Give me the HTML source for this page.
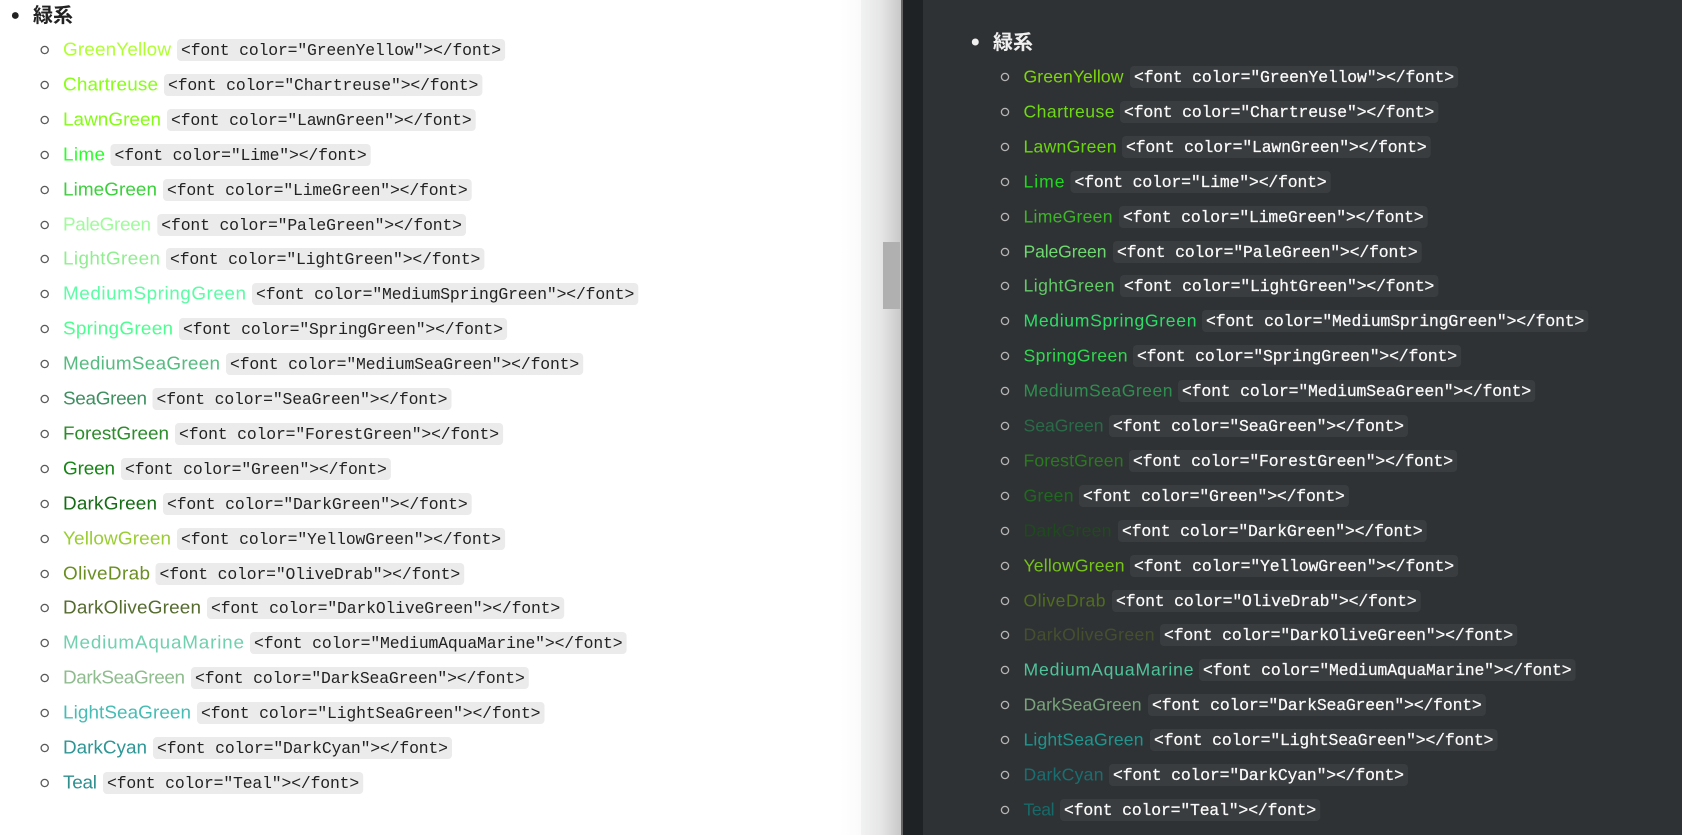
<!DOCTYPE html>
<html><head><meta charset="utf-8"><style>
html,body{margin:0;padding:0;background:#fff;width:1682px;height:835px;overflow:hidden}
svg{display:block}
.L .l{font:18.9px "Liberation Sans",sans-serif}
.D .l{font:17.6px "Liberation Sans",sans-serif}
.c{font:16.4px "Liberation Mono",monospace}
.t{font:bold 20px "Liberation Sans","Noto Sans CJK JP",sans-serif}
.L .c{fill:#222}
.L rect{fill:#ebebeb}
.L circle{fill:none;stroke:#5a5a5a;stroke-width:1.3}
.D .c{fill:#fafafa;stroke:#fafafa;stroke-width:.25}
.D rect{fill:#3a3d3f}
.D circle{fill:none;stroke:#b5b5b5;stroke-width:1.3}
</style></head><body>
<svg width="1682" height="835" viewBox="0 0 1682 835" xmlns="http://www.w3.org/2000/svg">
<defs><linearGradient id="s" x1="0" x2="1" y1="0" y2="0"><stop offset="0" stop-color="#f1f2f2"/><stop offset=".5" stop-color="#e6e6e6"/><stop offset="1" stop-color="#c8c8c8"/></linearGradient>
<linearGradient id="f" x1="0" x2="1" y1="0" y2="0"><stop offset="0" stop-color="#fff"/><stop offset="1" stop-color="#fafafa"/></linearGradient></defs>
<rect x="0" y="0" width="1682" height="835" fill="#fff"/>
<rect x="840" y="0" width="21" height="835" fill="url(#f)"/>
<rect x="861" y="0" width="40" height="835" fill="url(#s)"/>
<rect x="883" y="242" width="17" height="67" fill="#b0b0b0"/>
<rect x="901" y="0" width="2" height="835" fill="#666"/>
<rect x="903" y="0" width="20" height="835" fill="#1e2224"/>
<rect x="923" y="0" width="759" height="835" fill="#2f3234"/>

<g class="L">
<circle cx="15.3" cy="15.5" r="3.4" style="fill:#222;stroke:none"/>
<text class="t" x="33" y="22" fill="#222" textLength="40">緑系</text>
<g transform="translate(0,50)"><circle cx="44.7" r="3.6"/><text class="l" x="63" y="5.5" fill="#B0FF33" textLength="108">GreenYellow</text><rect x="177" y="-11" width="328.1" height="22" rx="4"/><text class="c" x="181" y="5" textLength="320.1">&lt;font color="GreenYellow"&gt;&lt;/font&gt;</text></g>
<g transform="translate(0,85)"><circle cx="44.7" r="3.6"/><text class="l" x="63" y="5.5" fill="#88FF15" textLength="95">Chartreuse</text><rect x="164" y="-11" width="318.4" height="22" rx="4"/><text class="c" x="168" y="5" textLength="310.4">&lt;font color="Chartreuse"&gt;&lt;/font&gt;</text></g>
<g transform="translate(0,120)"><circle cx="44.7" r="3.6"/><text class="l" x="63" y="5.5" fill="#85FC15" textLength="98">LawnGreen</text><rect x="167" y="-11" width="308.7" height="22" rx="4"/><text class="c" x="171" y="5" textLength="300.7">&lt;font color="LawnGreen"&gt;&lt;/font&gt;</text></g>
<g transform="translate(0,155)"><circle cx="44.7" r="3.6"/><text class="l" x="63" y="5.5" fill="#2BFF2B" textLength="42">Lime</text><rect x="110.5" y="-11" width="260.2" height="22" rx="4"/><text class="c" x="114.5" y="5" textLength="252.2">&lt;font color="Lime"&gt;&lt;/font&gt;</text></g>
<g transform="translate(0,190)"><circle cx="44.7" r="3.6"/><text class="l" x="63" y="5.5" fill="#3CD03C" textLength="94">LimeGreen</text><rect x="163" y="-11" width="308.7" height="22" rx="4"/><text class="c" x="167" y="5" textLength="300.7">&lt;font color="LimeGreen"&gt;&lt;/font&gt;</text></g>
<g transform="translate(0,225)"><circle cx="44.7" r="3.6"/><text class="l" x="63" y="5.5" fill="#A0FB9C" textLength="88">PaleGreen</text><rect x="157.3" y="-11" width="308.7" height="22" rx="4"/><text class="c" x="161.3" y="5" textLength="300.7">&lt;font color="PaleGreen"&gt;&lt;/font&gt;</text></g>
<g transform="translate(0,259)"><circle cx="44.7" r="3.6"/><text class="l" x="63" y="5.5" fill="#90EE90" textLength="97">LightGreen</text><rect x="166" y="-11" width="318.4" height="22" rx="4"/><text class="c" x="170" y="5" textLength="310.4">&lt;font color="LightGreen"&gt;&lt;/font&gt;</text></g>
<g transform="translate(0,294)"><circle cx="44.7" r="3.6"/><text class="l" x="63" y="5.5" fill="#5DFCA5" textLength="183">MediumSpringGreen</text><rect x="252" y="-11" width="386.3" height="22" rx="4"/><text class="c" x="256" y="5" textLength="378.3">&lt;font color="MediumSpringGreen"&gt;&lt;/font&gt;</text></g>
<g transform="translate(0,329)"><circle cx="44.7" r="3.6"/><text class="l" x="63" y="5.5" fill="#4DFF90" textLength="110">SpringGreen</text><rect x="179" y="-11" width="328.1" height="22" rx="4"/><text class="c" x="183" y="5" textLength="320.1">&lt;font color="SpringGreen"&gt;&lt;/font&gt;</text></g>
<g transform="translate(0,364)"><circle cx="44.7" r="3.6"/><text class="l" x="63" y="5.5" fill="#55BB80" textLength="157">MediumSeaGreen</text><rect x="226" y="-11" width="357.2" height="22" rx="4"/><text class="c" x="230" y="5" textLength="349.2">&lt;font color="MediumSeaGreen"&gt;&lt;/font&gt;</text></g>
<g transform="translate(0,399)"><circle cx="44.7" r="3.6"/><text class="l" x="63" y="5.5" fill="#3F8F60" textLength="84">SeaGreen</text><rect x="152.5" y="-11" width="299" height="22" rx="4"/><text class="c" x="156.5" y="5" textLength="291">&lt;font color="SeaGreen"&gt;&lt;/font&gt;</text></g>
<g transform="translate(0,434)"><circle cx="44.7" r="3.6"/><text class="l" x="63" y="5.5" fill="#2C8C2C" textLength="106">ForestGreen</text><rect x="175" y="-11" width="328.1" height="22" rx="4"/><text class="c" x="179" y="5" textLength="320.1">&lt;font color="ForestGreen"&gt;&lt;/font&gt;</text></g>
<g transform="translate(0,469)"><circle cx="44.7" r="3.6"/><text class="l" x="63" y="5.5" fill="#158515" textLength="52">Green</text><rect x="121" y="-11" width="269.9" height="22" rx="4"/><text class="c" x="125" y="5" textLength="261.9">&lt;font color="Green"&gt;&lt;/font&gt;</text></g>
<g transform="translate(0,504)"><circle cx="44.7" r="3.6"/><text class="l" x="63" y="5.5" fill="#146C14" textLength="94">DarkGreen</text><rect x="163" y="-11" width="308.7" height="22" rx="4"/><text class="c" x="167" y="5" textLength="300.7">&lt;font color="DarkGreen"&gt;&lt;/font&gt;</text></g>
<g transform="translate(0,539)"><circle cx="44.7" r="3.6"/><text class="l" x="63" y="5.5" fill="#9ACD32" textLength="108">YellowGreen</text><rect x="177" y="-11" width="328.1" height="22" rx="4"/><text class="c" x="181" y="5" textLength="320.1">&lt;font color="YellowGreen"&gt;&lt;/font&gt;</text></g>
<g transform="translate(0,574)"><circle cx="44.7" r="3.6"/><text class="l" x="63" y="5.5" fill="#6B8E23" textLength="87">OliveDrab</text><rect x="155.5" y="-11" width="308.7" height="22" rx="4"/><text class="c" x="159.5" y="5" textLength="300.7">&lt;font color="OliveDrab"&gt;&lt;/font&gt;</text></g>
<g transform="translate(0,608)"><circle cx="44.7" r="3.6"/><text class="l" x="63" y="5.5" fill="#556B2F" textLength="138">DarkOliveGreen</text><rect x="207" y="-11" width="357.2" height="22" rx="4"/><text class="c" x="211" y="5" textLength="349.2">&lt;font color="DarkOliveGreen"&gt;&lt;/font&gt;</text></g>
<g transform="translate(0,643)"><circle cx="44.7" r="3.6"/><text class="l" x="63" y="5.5" fill="#70D0AF" textLength="181">MediumAquaMarine</text><rect x="250" y="-11" width="376.6" height="22" rx="4"/><text class="c" x="254" y="5" textLength="368.6">&lt;font color="MediumAquaMarine"&gt;&lt;/font&gt;</text></g>
<g transform="translate(0,678)"><circle cx="44.7" r="3.6"/><text class="l" x="63" y="5.5" fill="#8FBC8F" textLength="122">DarkSeaGreen</text><rect x="191" y="-11" width="337.8" height="22" rx="4"/><text class="c" x="195" y="5" textLength="329.8">&lt;font color="DarkSeaGreen"&gt;&lt;/font&gt;</text></g>
<g transform="translate(0,713)"><circle cx="44.7" r="3.6"/><text class="l" x="63" y="5.5" fill="#45BDB5" textLength="128">LightSeaGreen</text><rect x="197" y="-11" width="347.5" height="22" rx="4"/><text class="c" x="201" y="5" textLength="339.5">&lt;font color="LightSeaGreen"&gt;&lt;/font&gt;</text></g>
<g transform="translate(0,748)"><circle cx="44.7" r="3.6"/><text class="l" x="63" y="5.5" fill="#2F9696" textLength="84">DarkCyan</text><rect x="153" y="-11" width="299" height="22" rx="4"/><text class="c" x="157" y="5" textLength="291">&lt;font color="DarkCyan"&gt;&lt;/font&gt;</text></g>
<g transform="translate(0,783)"><circle cx="44.7" r="3.6"/><text class="l" x="63" y="5.5" fill="#2F8F8F" textLength="34">Teal</text><rect x="103" y="-11" width="260.2" height="22" rx="4"/><text class="c" x="107" y="5" textLength="252.2">&lt;font color="Teal"&gt;&lt;/font&gt;</text></g>
</g>

<g class="D">
<circle cx="975.3" cy="42" r="3.5" style="fill:#f0f0f0;stroke:none"/>
<text class="t" x="993" y="49" fill="#f0f0f0" textLength="40">緑系</text>
<g transform="translate(0,77)"><circle cx="1005" r="3.6"/><text class="l" x="1023.5" y="5.5" fill="#7ED60E" textLength="100">GreenYellow</text><rect x="1130" y="-11" width="328.1" height="22" rx="4"/><text class="c" x="1134" y="5" textLength="320.1">&lt;font color="GreenYellow"&gt;&lt;/font&gt;</text></g>
<g transform="translate(0,112)"><circle cx="1005" r="3.6"/><text class="l" x="1023.5" y="5.5" fill="#6FD914" textLength="91">Chartreuse</text><rect x="1120" y="-11" width="318.4" height="22" rx="4"/><text class="c" x="1124" y="5" textLength="310.4">&lt;font color="Chartreuse"&gt;&lt;/font&gt;</text></g>
<g transform="translate(0,147)"><circle cx="1005" r="3.6"/><text class="l" x="1023.5" y="5.5" fill="#6BD60F" textLength="93">LawnGreen</text><rect x="1122" y="-11" width="308.7" height="22" rx="4"/><text class="c" x="1126" y="5" textLength="300.7">&lt;font color="LawnGreen"&gt;&lt;/font&gt;</text></g>
<g transform="translate(0,182)"><circle cx="1005" r="3.6"/><text class="l" x="1023.5" y="5.5" fill="#1FD81F" textLength="41">Lime</text><rect x="1070.5" y="-11" width="260.2" height="22" rx="4"/><text class="c" x="1074.5" y="5" textLength="252.2">&lt;font color="Lime"&gt;&lt;/font&gt;</text></g>
<g transform="translate(0,217)"><circle cx="1005" r="3.6"/><text class="l" x="1023.5" y="5.5" fill="#3DB52A" textLength="89">LimeGreen</text><rect x="1119" y="-11" width="308.7" height="22" rx="4"/><text class="c" x="1123" y="5" textLength="300.7">&lt;font color="LimeGreen"&gt;&lt;/font&gt;</text></g>
<g transform="translate(0,252)"><circle cx="1005" r="3.6"/><text class="l" x="1023.5" y="5.5" fill="#6FD870" textLength="83">PaleGreen</text><rect x="1113" y="-11" width="308.7" height="22" rx="4"/><text class="c" x="1117" y="5" textLength="300.7">&lt;font color="PaleGreen"&gt;&lt;/font&gt;</text></g>
<g transform="translate(0,286)"><circle cx="1005" r="3.6"/><text class="l" x="1023.5" y="5.5" fill="#63C968" textLength="91">LightGreen</text><rect x="1120" y="-11" width="318.4" height="22" rx="4"/><text class="c" x="1124" y="5" textLength="310.4">&lt;font color="LightGreen"&gt;&lt;/font&gt;</text></g>
<g transform="translate(0,321)"><circle cx="1005" r="3.6"/><text class="l" x="1023.5" y="5.5" fill="#2FDC68" textLength="173">MediumSpringGreen</text><rect x="1202" y="-11" width="386.3" height="22" rx="4"/><text class="c" x="1206" y="5" textLength="378.3">&lt;font color="MediumSpringGreen"&gt;&lt;/font&gt;</text></g>
<g transform="translate(0,356)"><circle cx="1005" r="3.6"/><text class="l" x="1023.5" y="5.5" fill="#30D850" textLength="104">SpringGreen</text><rect x="1133" y="-11" width="328.1" height="22" rx="4"/><text class="c" x="1137" y="5" textLength="320.1">&lt;font color="SpringGreen"&gt;&lt;/font&gt;</text></g>
<g transform="translate(0,391)"><circle cx="1005" r="3.6"/><text class="l" x="1023.5" y="5.5" fill="#2F8F50" textLength="149">MediumSeaGreen</text><rect x="1178" y="-11" width="357.2" height="22" rx="4"/><text class="c" x="1182" y="5" textLength="349.2">&lt;font color="MediumSeaGreen"&gt;&lt;/font&gt;</text></g>
<g transform="translate(0,426)"><circle cx="1005" r="3.6"/><text class="l" x="1023.5" y="5.5" fill="#2A6A48" textLength="80">SeaGreen</text><rect x="1109" y="-11" width="299" height="22" rx="4"/><text class="c" x="1113" y="5" textLength="291">&lt;font color="SeaGreen"&gt;&lt;/font&gt;</text></g>
<g transform="translate(0,461)"><circle cx="1005" r="3.6"/><text class="l" x="1023.5" y="5.5" fill="#2A7A20" textLength="100">ForestGreen</text><rect x="1129" y="-11" width="328.1" height="22" rx="4"/><text class="c" x="1133" y="5" textLength="320.1">&lt;font color="ForestGreen"&gt;&lt;/font&gt;</text></g>
<g transform="translate(0,496)"><circle cx="1005" r="3.6"/><text class="l" x="1023.5" y="5.5" fill="#1F6A1F" textLength="50">Green</text><rect x="1079" y="-11" width="269.9" height="22" rx="4"/><text class="c" x="1083" y="5" textLength="261.9">&lt;font color="Green"&gt;&lt;/font&gt;</text></g>
<g transform="translate(0,531)"><circle cx="1005" r="3.6"/><text class="l" x="1023.5" y="5.5" fill="#1E4A1E" textLength="88">DarkGreen</text><rect x="1118" y="-11" width="308.7" height="22" rx="4"/><text class="c" x="1122" y="5" textLength="300.7">&lt;font color="DarkGreen"&gt;&lt;/font&gt;</text></g>
<g transform="translate(0,566)"><circle cx="1005" r="3.6"/><text class="l" x="1023.5" y="5.5" fill="#76C41A" textLength="101">YellowGreen</text><rect x="1130" y="-11" width="328.1" height="22" rx="4"/><text class="c" x="1134" y="5" textLength="320.1">&lt;font color="YellowGreen"&gt;&lt;/font&gt;</text></g>
<g transform="translate(0,601)"><circle cx="1005" r="3.6"/><text class="l" x="1023.5" y="5.5" fill="#506E1C" textLength="82">OliveDrab</text><rect x="1112" y="-11" width="308.7" height="22" rx="4"/><text class="c" x="1116" y="5" textLength="300.7">&lt;font color="OliveDrab"&gt;&lt;/font&gt;</text></g>
<g transform="translate(0,635)"><circle cx="1005" r="3.6"/><text class="l" x="1023.5" y="5.5" fill="#454F2E" textLength="131">DarkOliveGreen</text><rect x="1160" y="-11" width="357.2" height="22" rx="4"/><text class="c" x="1164" y="5" textLength="349.2">&lt;font color="DarkOliveGreen"&gt;&lt;/font&gt;</text></g>
<g transform="translate(0,670)"><circle cx="1005" r="3.6"/><text class="l" x="1023.5" y="5.5" fill="#4FC39A" textLength="170">MediumAquaMarine</text><rect x="1199" y="-11" width="376.6" height="22" rx="4"/><text class="c" x="1203" y="5" textLength="368.6">&lt;font color="MediumAquaMarine"&gt;&lt;/font&gt;</text></g>
<g transform="translate(0,705)"><circle cx="1005" r="3.6"/><text class="l" x="1023.5" y="5.5" fill="#7AA37C" textLength="118">DarkSeaGreen</text><rect x="1148" y="-11" width="337.8" height="22" rx="4"/><text class="c" x="1152" y="5" textLength="329.8">&lt;font color="DarkSeaGreen"&gt;&lt;/font&gt;</text></g>
<g transform="translate(0,740)"><circle cx="1005" r="3.6"/><text class="l" x="1023.5" y="5.5" fill="#20958E" textLength="120">LightSeaGreen</text><rect x="1150" y="-11" width="347.5" height="22" rx="4"/><text class="c" x="1154" y="5" textLength="339.5">&lt;font color="LightSeaGreen"&gt;&lt;/font&gt;</text></g>
<g transform="translate(0,775)"><circle cx="1005" r="3.6"/><text class="l" x="1023.5" y="5.5" fill="#186F72" textLength="80">DarkCyan</text><rect x="1109" y="-11" width="299" height="22" rx="4"/><text class="c" x="1113" y="5" textLength="291">&lt;font color="DarkCyan"&gt;&lt;/font&gt;</text></g>
<g transform="translate(0,810)"><circle cx="1005" r="3.6"/><text class="l" x="1023.5" y="5.5" fill="#176A6A" textLength="31">Teal</text><rect x="1060" y="-11" width="260.2" height="22" rx="4"/><text class="c" x="1064" y="5" textLength="252.2">&lt;font color="Teal"&gt;&lt;/font&gt;</text></g>
</g>
</svg>
</body></html>
